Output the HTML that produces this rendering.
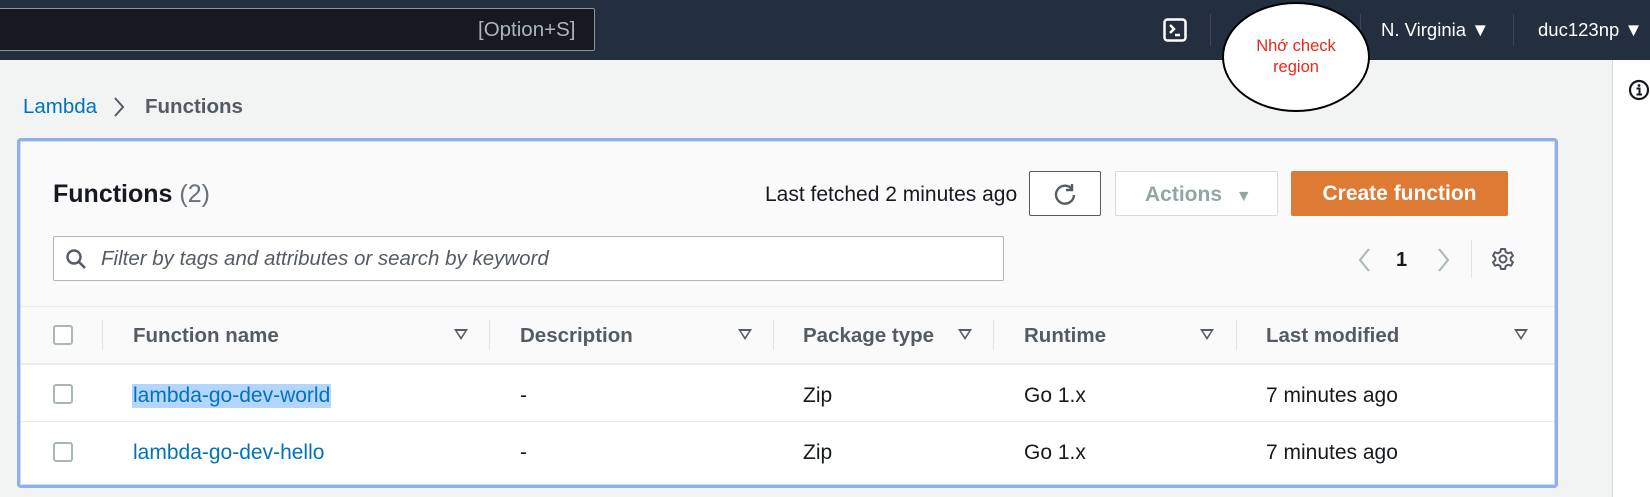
<!DOCTYPE html>
<html><head><meta charset="utf-8"><style>
*{box-sizing:border-box;margin:0;padding:0}
body{width:1650px;height:497px;overflow:hidden;background:#f2f3f3;font-family:"Liberation Sans","Noto Sans CJK SC",sans-serif;position:relative;color:#16191f}
.a{position:absolute;white-space:nowrap}
.hdr{position:absolute;left:0;top:0;width:1650px;height:60px;background:#232f3e}
.th{font-weight:bold;color:#545b64;font-size:20.5px;top:324px}
.td{font-size:21px;top:384px}
.td2{font-size:21px;top:441px}
.cb{position:absolute;width:20px;height:20px;border:2px solid #aab7b8;border-radius:3px;background:#fff;left:53px}
.vd{position:absolute;width:1px;height:30px;background:#e1e4e4;top:320px}
.fi{position:absolute;top:329px;width:0;height:0;border-left:7px solid transparent;border-right:7px solid transparent;border-top:11px solid #545b64}
.fi:after{content:"";position:absolute;left:-4px;top:-9px;border-left:4px solid transparent;border-right:4px solid transparent;border-top:6px solid #fafafa}
</style></head><body>
<div class="hdr"></div>
<div class="a" style="left:-5px;top:8px;width:600px;height:43px;background:#16191f;border:1px solid #879596;border-radius:2px"></div>
<div class="a" style="left:478px;top:18px;color:#aab7b8;font-size:20.5px">[Option+S]</div>
<svg class="a" style="left:1163px;top:18px" width="24" height="24" viewBox="0 0 24 24"><rect x="1.5" y="1.5" width="21" height="21" rx="3" fill="none" stroke="#fff" stroke-width="2.5"/><path d="M7 7l4 4-4 4M12 17h5" fill="none" stroke="#fff" stroke-width="2.5"/></svg>
<div class="a" style="left:1210px;top:14px;width:1px;height:32px;background:#414750"></div>
<div class="a" style="left:1360px;top:14px;width:1px;height:32px;background:#414750"></div>
<div class="a" style="left:1381px;top:19px;color:#fff;font-size:18.5px">N. Virginia ▼</div>
<div class="a" style="left:1513px;top:14px;width:1px;height:32px;background:#414750"></div>
<div class="a" style="left:1538px;top:19px;color:#fff;font-size:18.5px">duc123np ▼</div>
<div class="a" style="left:1222px;top:2px;width:148px;height:110px;border-radius:50%;background:#fff;border:2px solid #000"></div>
<div class="a" style="left:1222px;top:36px;width:148px;text-align:center;color:#e8281b;font-size:16.5px;line-height:21px;white-space:normal">Nhớ check<br>region</div>
<div class="a" style="left:1612px;top:60px;width:38px;height:437px;background:#fff;border-left:1px solid #d5dbdb"></div>
<svg class="a" style="left:1628px;top:79px" width="22" height="22" viewBox="0 0 22 22"><circle cx="11" cy="11" r="9" fill="none" stroke="#16191f" stroke-width="2.2"/><circle cx="11" cy="6.5" r="1.4" fill="#16191f"/><path d="M8.5 9.5h3v6M8.5 15.5h5.5" stroke="#16191f" stroke-width="2" fill="none"/></svg>
<div class="a" style="left:23px;top:95px;font-size:20.5px;color:#0073bb">Lambda</div>
<svg class="a" style="left:112px;top:95px" width="14" height="24" viewBox="0 0 14 24"><path d="M3 3l8 9-8 9" fill="none" stroke="#545b64" stroke-width="2"/></svg>
<div class="a" style="left:145px;top:95px;font-size:20.5px;color:#545b64;font-weight:bold">Functions</div>
<div class="a" style="left:17px;top:138px;width:1541px;height:350px;border:3px solid #8fb0f0;border-radius:4px;background:#fafafa"></div>
<div class="a" style="left:20px;top:141px;width:1535px;height:344px;border:1px solid #d5dbdb;background:#fafafa"></div>
<div class="a" style="left:53px;top:180px;font-size:25px;font-weight:bold">Functions <span style="font-weight:normal;color:#687078">(2)</span></div>
<div class="a" style="left:765px;top:183px;font-size:21px;color:#16191f">Last fetched 2 minutes ago</div>
<div class="a" style="left:1029px;top:171px;width:72px;height:45px;border:1px solid #545b64;border-radius:2px;background:#fff"></div>
<svg class="a" style="left:1053px;top:182px" width="24" height="24" viewBox="0 0 24 24"><path d="M19 7A9 9 0 1 0 21 13" fill="none" stroke="#545b64" stroke-width="2.4"/><path d="M19 2v6h-6" fill="none" stroke="#545b64" stroke-width="2.4"/></svg>
<div class="a" style="left:1115px;top:171px;width:163px;height:45px;border:1px solid #d5dbdb;border-radius:2px;background:#fff"></div>
<div class="a" style="left:1145px;top:183px;font-size:21px;font-weight:bold;color:#95a5a6">Actions <span style="font-size:16px;margin-left:8px">▼</span></div>
<div class="a" style="left:1291px;top:171px;width:217px;height:45px;background:#dd7a34;border-radius:2px"></div>
<div class="a" style="left:1291px;top:182px;width:217px;text-align:center;font-size:21px;font-weight:bold;color:#fff">Create function</div>
<div class="a" style="left:53px;top:236px;width:951px;height:45px;border:1px solid #aab7b8;border-radius:2px;background:#fff"></div>
<svg class="a" style="left:65px;top:248px" width="22" height="22" viewBox="0 0 22 22"><circle cx="9" cy="9" r="6.5" fill="none" stroke="#545b64" stroke-width="2.4"/><path d="M14 14l6 6" stroke="#545b64" stroke-width="2.6"/></svg>
<div class="a" style="left:101px;top:247px;font-size:20.5px;font-style:italic;color:#545b64">Filter by tags and attributes or search by keyword</div>
<svg class="a" style="left:1356px;top:246px" width="16" height="28" viewBox="0 0 16 28"><path d="M13 3L4 14l9 11" fill="none" stroke="#aab7b8" stroke-width="2"/></svg>
<div class="a" style="left:1396px;top:249px;font-size:20px;font-weight:bold">1</div>
<svg class="a" style="left:1436px;top:246px" width="16" height="28" viewBox="0 0 16 28"><path d="M3 3l9 11-9 11" fill="none" stroke="#aab7b8" stroke-width="2"/></svg>
<div class="a" style="left:1471px;top:240px;width:1px;height:38px;background:#e1e4e4"></div>
<svg class="a" style="left:1491px;top:247px" width="24" height="24" viewBox="0 0 24 24"><circle cx="12" cy="12" r="3.5" fill="none" stroke="#545b64" stroke-width="2"/><path d="M10 2h4l.7 3 2.3 1.3 3-1 2 3.4-2.3 2v2.6l2.3 2-2 3.4-3-1-2.3 1.3-.7 3h-4l-.7-3-2.3-1.3-3 1-2-3.4 2.3-2v-2.6l-2.3-2 2-3.4 3 1L9.3 5z" fill="none" stroke="#545b64" stroke-width="2" stroke-linejoin="round"/></svg>
<div class="a" style="left:21px;top:306px;width:1533px;height:1px;background:#eaeded"></div>
<div class="a" style="left:21px;top:363px;width:1533px;height:2px;background:#eaeded"></div>
<div class="a" style="left:21px;top:365px;width:1533px;height:117px;background:#fff"></div>
<div class="a" style="left:21px;top:421px;width:1533px;height:1px;background:#eaeded"></div>
<div class="cb" style="top:325px"></div><div class="cb" style="top:384px"></div><div class="cb" style="top:442px"></div>
<div class="vd" style="left:102px"></div><div class="vd" style="left:489px"></div><div class="vd" style="left:773px"></div><div class="vd" style="left:993px"></div><div class="vd" style="left:1236px"></div>
<div class="a th" style="left:133px">Function name</div><div class="fi" style="left:454px"></div>
<div class="a th" style="left:520px">Description</div><div class="fi" style="left:738px"></div>
<div class="a th" style="left:803px">Package type</div><div class="fi" style="left:958px"></div>
<div class="a th" style="left:1024px">Runtime</div><div class="fi" style="left:1200px"></div>
<div class="a th" style="left:1266px">Last modified</div><div class="fi" style="left:1514px"></div>
<div class="a td" style="left:132px;color:#0073bb;background:#b4d5fe;padding:0 1px">lambda-go-dev-world</div>
<div class="a td" style="left:520px">-</div><div class="a td" style="left:803px">Zip</div><div class="a td" style="left:1024px">Go 1.x</div><div class="a td" style="left:1266px">7 minutes ago</div>
<div class="a td2" style="left:133px;color:#0073bb">lambda-go-dev-hello</div>
<div class="a td2" style="left:520px">-</div><div class="a td2" style="left:803px">Zip</div><div class="a td2" style="left:1024px">Go 1.x</div><div class="a td2" style="left:1266px">7 minutes ago</div>
</body></html>
